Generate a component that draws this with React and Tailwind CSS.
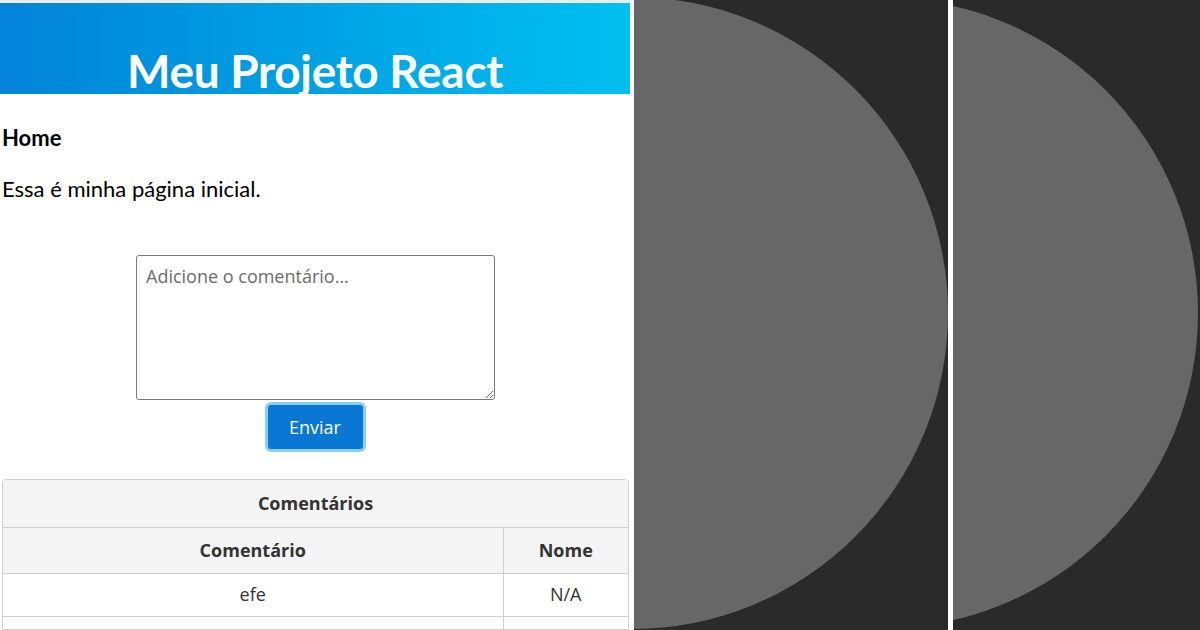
import React from "react";

const sans = "font-['Open_Sans',sans-serif]";
const title = "font-['Lato','Open_Sans',sans-serif]";

function HalfMoon({ cx, r }) {
  return (
    <svg className="block w-full h-full" preserveAspectRatio="none">
      <circle cx={cx} cy={313} r={r} fill="#676767" />
    </svg>
  );
}

function CommentsTable() {
  return (
    <div className="ml-[2px] mr-[1px] mt-[27px] border border-[#cfcfcf] rounded-t-[4px] overflow-hidden">
      <table className={`w-full border-collapse text-[18px] text-[#333] ${sans}`}>
        <thead>
          <tr className="bg-[#f4f4f4] h-[47px]">
            <th colSpan={2} className="font-bold text-center">
              Comentários
            </th>
          </tr>
          <tr className="bg-[#f4f4f4] h-[46px]">
            <th className="font-bold text-center border-t border-[#cfcfcf] w-[500px]">
              Comentário
            </th>
            <th className="font-bold text-center border-t border-l border-[#cfcfcf]">
              Nome
            </th>
          </tr>
        </thead>
        <tbody>
          <tr className="h-[43px] bg-white">
            <td className="text-center border-t border-[#cfcfcf]">efe</td>
            <td className="text-center border-t border-l border-[#cfcfcf]">N/A</td>
          </tr>
          <tr className="h-[43px] bg-white">
            <td className="text-center border-t border-[#cfcfcf]">&nbsp;</td>
            <td className="text-center border-t border-l border-[#cfcfcf]">&nbsp;</td>
          </tr>
        </tbody>
      </table>
    </div>
  );
}

export default function App() {
  return (
    <div className="flex w-[1200px] h-[630px] bg-white overflow-hidden">
      {/* screenshot of the page */}
      <div className="w-[630px] h-full flex flex-col overflow-hidden bg-white">
        <div className="h-[3px] bg-[#ececec] shrink-0" />
        <div className="h-[91px] shrink-0 flex items-end justify-center bg-gradient-to-r from-[#0383d9] to-[#02c0f0]">
          <h1 className={`text-white font-bold text-[46px] leading-none tracking-[-0.3px] ${title}`}>
            Meu Projeto React
          </h1>
        </div>
        <div className={`pl-[2px] pt-[30px] text-black ${title}`}>
          <h2 className="font-bold text-[22px] leading-[28px]">Home</h2>
          <p className="mt-[23px] text-[22px] leading-[28px]">
            Essa é minha página inicial.
          </p>
        </div>
        <div className="flex flex-col items-center mt-[52px]">
          <textarea
            placeholder="Adicione o comentário..."
            className={`w-[359px] h-[145px] ml-[1px] border border-[#7a7a7a] rounded-[3px] px-[9px] py-[7px] text-[18px] placeholder:text-[#6b6b6b] resize ${sans}`}
          />
          <button
            className={`mt-[2px] w-[101px] h-[50px] rounded-[6px] border-[3px] border-[#8ccff5] bg-[#0878d4] text-white text-[18px] ${sans}`}
          >
            Enviar
          </button>
        </div>
        <CommentsTable />
      </div>

      <div className="w-[4px] shrink-0 bg-white" />
      <div className="w-[314px] h-full shrink-0 bg-[#2a2a2a]">
        <HalfMoon cx={-2} r={316} />
      </div>
      <div className="w-[5px] shrink-0 bg-white" />
      <div className="flex-1 h-full bg-[#2a2a2a]">
        <HalfMoon cx={-70} r={315} />
      </div>
    </div>
  );
}
